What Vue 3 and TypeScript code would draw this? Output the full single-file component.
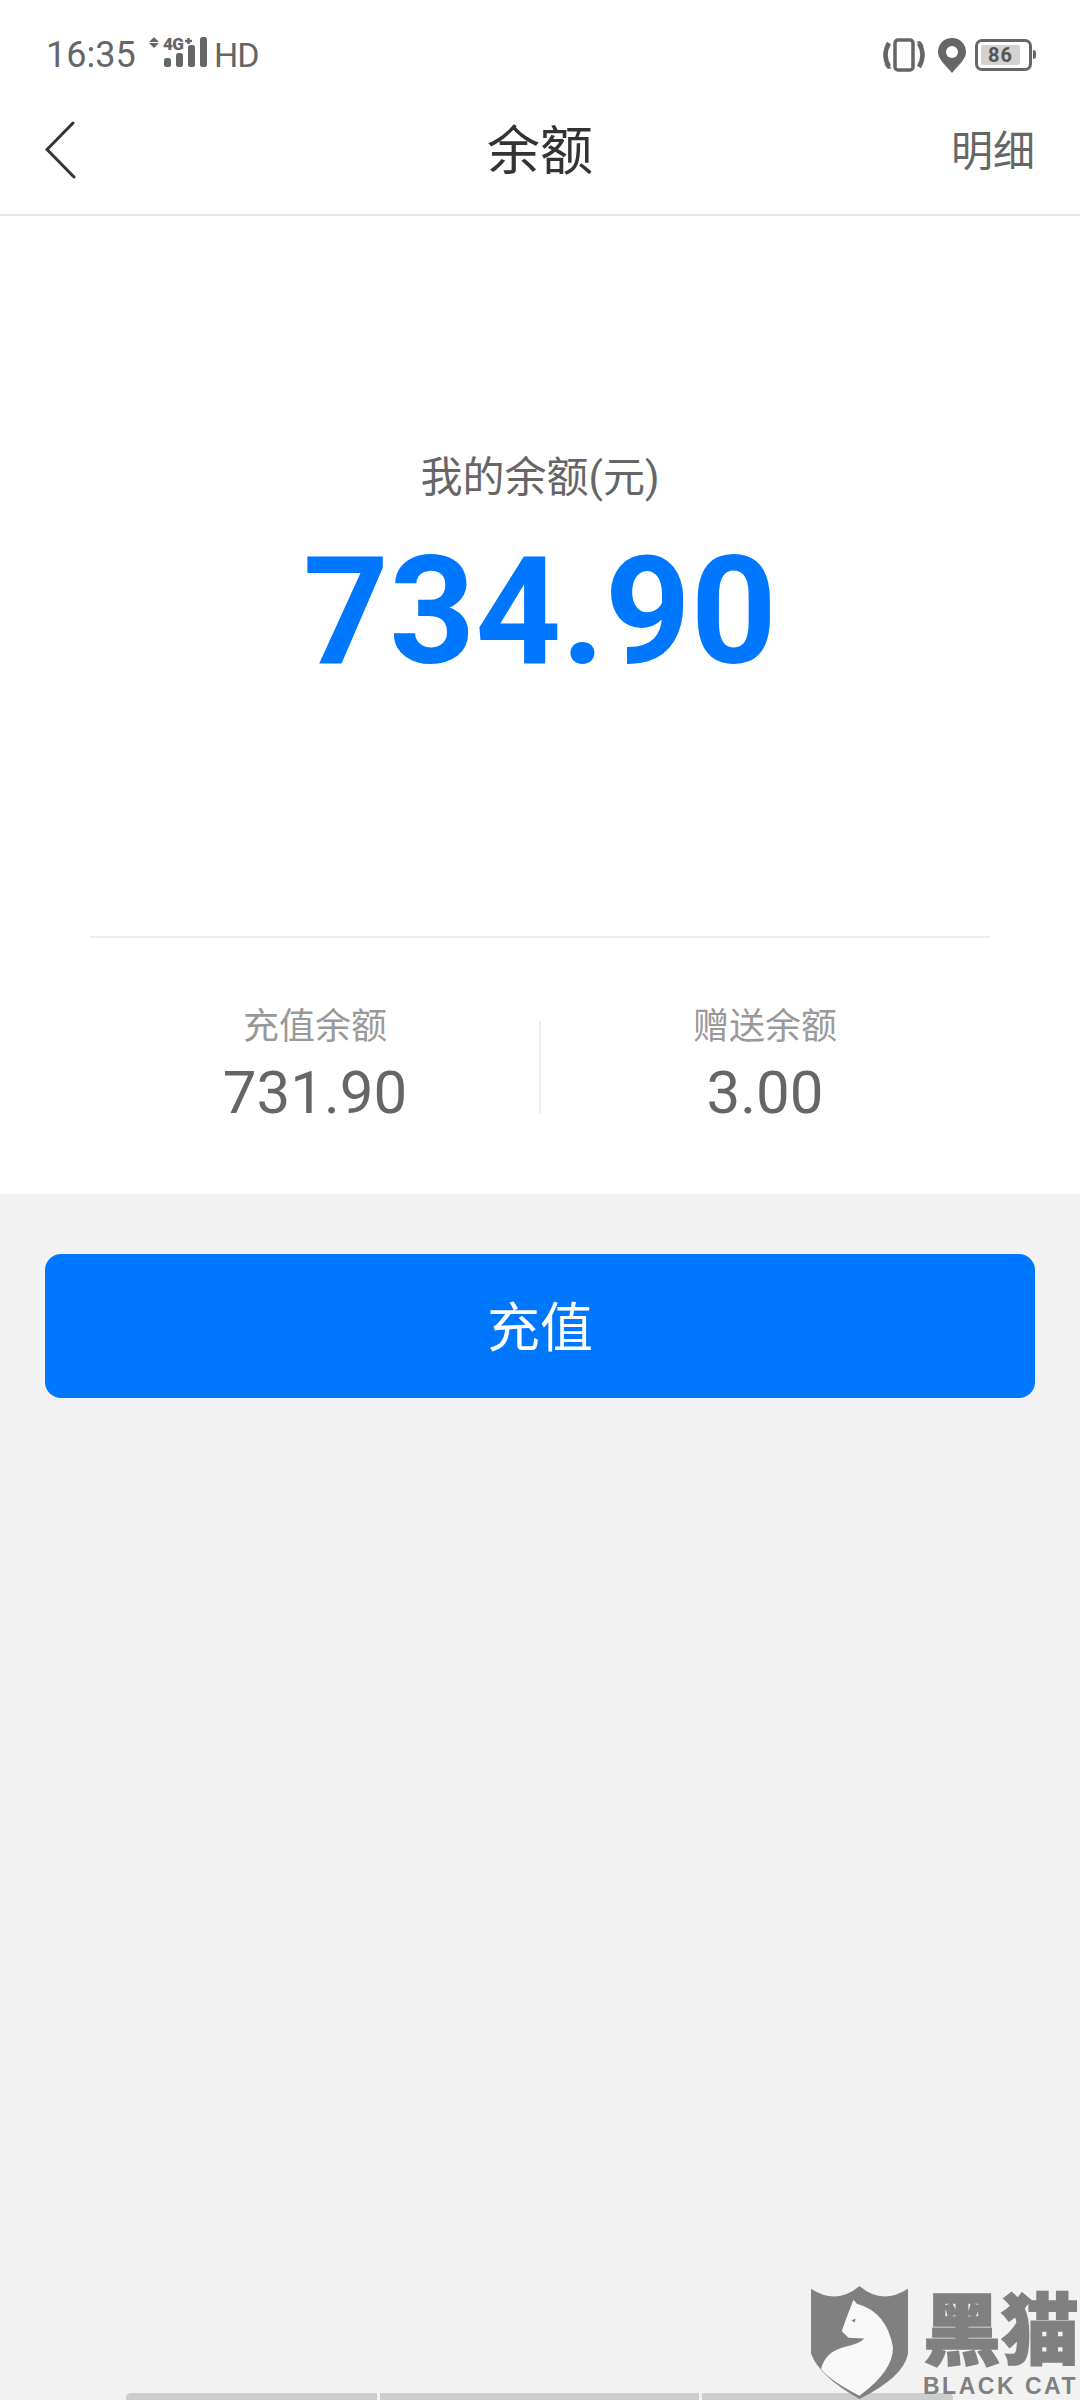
<script setup lang="ts">
const stats = [
  { label: "充值余额", value: "731.90" },
  { label: "赠送余额", value: "3.00" },
];
</script>

<template>
  <div class="page">
    <div class="status">
      <div class="status_left">
        <span class="time">16:35</span>
        <svg class="signal" width="62" height="42" viewBox="0 -8 62 42">
          <path d="M5 0l5 5H0zM5 11l5-5H0z" fill="#666" />
          <text x="14" y="13" class="net">4G</text>
          <path d="M36 4h7M39.500 1v6" stroke="#666" stroke-width="2.500" />
          <rect x="15" y="21" width="7" height="9" rx="2.500" fill="#666" />
          <rect x="27" y="16" width="7" height="14" rx="2.500" fill="#666" />
          <rect x="39" y="8" width="7" height="22" rx="2.500" fill="#666" />
          <rect x="51" y="0" width="7" height="30" rx="2.500" fill="#666" />
        </svg>
        <span class="hd">HD</span>
      </div>
      <div class="status_right">
        <svg width="44" height="34" viewBox="0 0 44 34">
          <rect x="13" y="2" width="18" height="30" rx="3" fill="none" stroke="#666" stroke-width="3.500" />
          <path d="M7 5Q0 17 7 29" fill="none" stroke="#666" stroke-width="4.500" />
          <path d="M37 5Q44 17 37 29" fill="none" stroke="#666" stroke-width="4.500" />
          <path d="M2 26l8 4-4 1zM42 8l-8-4 4-1z" fill="#666" />
        </svg>
        <svg width="28" height="35" viewBox="0 0 28 35">
          <path d="M14 0C6 0 0 6 0 14c0 8 9 14 14 21 5-7 14-13 14-21C28 6 22 0 14 0z" fill="#666" />
          <circle cx="14" cy="14" r="6" fill="#fff" />
        </svg>
        <div class="battery">
          <div class="battery_fill">86</div>
        </div>
      </div>
    </div>

    <div class="nav">
      <svg class="back" width="32" height="58" viewBox="0 0 32 58">
        <path d="M28 2L2 28.500 29 56" fill="none" stroke="#333" stroke-width="3" stroke-linecap="round" />
      </svg>
      <div class="title">余额</div>
      <div class="detail">明细</div>
    </div>

    <div class="summary">
      <div class="hero">
        <div class="hero_label">我的余额(元)</div>
        <div class="hero_value">734.90</div>
      </div>
      <div class="stats">
        <div v-for="s in stats" :key="s.label" class="stat">
          <div class="stat_label">{{ s.label }}</div>
          <div class="stat_value">{{ s.value }}</div>
        </div>
      </div>
    </div>

    <button class="recharge">充值</button>

    <div class="watermark">
      <svg width="97" height="113" viewBox="213 137 290 338">
        <path d="M213 145Q290 195 358 137Q425 195 503 145L503 340Q490 410 358 475Q240 410 213 340Z" fill="#808080" />
        <path d="M340 178L350 190Q440 215 458 320Q460 390 358 465Q270 420 243 385Q255 335 310 320Q360 310 372 294L325 292L305 272L318 235Z" fill="#f8f8f8" />
        <path d="M334 240l12-6-2 12z" fill="#808080" />
      </svg>
      <div class="brand">
        <div class="brand_cn">黑猫</div>
        <div class="brand_en">BLACK CAT</div>
      </div>
    </div>

    <div class="bottom_bar">
      <span class="seg seg_a"></span>
      <span class="seg seg_b"></span>
      <span class="seg seg_c"></span>
    </div>
  </div>
</template>

<style scoped>
.page {
  position: relative;
  width: 1080px;
  height: 2400px;
  overflow: hidden;
  display: flex;
  flex-direction: column;
  background: #f2f2f2;
  font-family: Roboto, "Noto Sans CJK SC", sans-serif;
}
.status {
  height: 74px;
  padding: 34px 48px 0 46px;
  box-sizing: border-box;
  background: #fff;
  display: flex;
  justify-content: space-between;
  align-items: flex-start;
}
.status_left {
  display: flex;
  align-items: center;
  height: 42px;
  color: #666;
}
.time {
  font-size: 36px;
  line-height: 42px;
  width: 103px;
}
.signal {
  margin-top: -11px;
}
.net {
  font: 900 17px Roboto, sans-serif;
  letter-spacing: -0.5px;
  fill: #666;
}
.hd {
  font-size: 34px;
  line-height: 42px;
  letter-spacing: -1px;
  margin-left: 3px;
}
.status_right {
  display: flex;
  align-items: center;
  gap: 12px;
  height: 42px;
}
.battery {
  position: relative;
  width: 57px;
  height: 32px;
  box-sizing: border-box;
  border: 3px solid #666;
  border-radius: 7px;
  margin-left: -3px;
  padding: 3px;
}
.battery::after {
  content: "";
  position: absolute;
  right: -7px;
  top: 8px;
  width: 3px;
  height: 9px;
  border-radius: 0 3px 3px 0;
  background: #666;
}
.battery_fill {
  width: 39px;
  height: 20px;
  background: #d2d2d2;
  border-radius: 2px;
  color: #555;
  font-size: 20px;
  font-weight: 700;
  line-height: 20px;
  text-align: center;
  letter-spacing: 1px;
}
.nav {
  position: relative;
  height: 142px;
  background: #fff;
  border-bottom: 2px solid #e6e6e6;
  box-sizing: border-box;
  display: flex;
  align-items: center;
  justify-content: center;
}
.back {
  position: absolute;
  left: 45px;
  top: 47px;
}
.title {
  font-size: 53px;
  line-height: 76px;
  color: #333;
  margin-top: 15px;
}
.detail {
  position: absolute;
  right: 45px;
  top: 48px;
  font-size: 42px;
  line-height: 60px;
  color: #666;
}
.summary {
  background: #fff;
  height: 978px;
  padding: 0 90px;
  box-sizing: border-box;
  display: flex;
  flex-direction: column;
}
.hero {
  height: 722px;
  border-bottom: 2px solid #ececec;
  box-sizing: border-box;
  display: flex;
  flex-direction: column;
  align-items: center;
  padding-top: 232px;
}
.hero_label {
  font-size: 42px;
  line-height: 60px;
  color: #666;
}
.hero_value {
  font-size: 150px;
  line-height: 178px;
  font-weight: 700;
  color: #0077ff;
  margin-top: 15px;
}
.stats {
  position: relative;
  display: grid;
  grid-template-columns: 1fr 1fr;
  margin: 63px -90px 0;
  padding: 0 90px;
}
.stats::after {
  content: "";
  position: absolute;
  left: 539px;
  top: 20px;
  width: 2px;
  height: 93px;
  background: #eee;
}
.stat {
  display: flex;
  flex-direction: column;
  align-items: center;
}
.stat_label {
  font-size: 36px;
  line-height: 52px;
  color: #999;
}
.stat_value {
  font-size: 60px;
  line-height: 70px;
  color: #666;
  margin-top: 5px;
}
.recharge {
  display: block;
  width: 990px;
  height: 144px;
  margin: 60px 45px 0;
  border: 0;
  padding: 0 0 5px;
  border-radius: 16px;
  background: #0077ff;
  color: #fff;
  font-family: inherit;
  font-size: 53px;
}
.watermark {
  position: absolute;
  left: 811px;
  top: 2286px;
  z-index: 2;
  display: flex;
  gap: 15px;
}
.brand {
  color: #808080;
  margin-top: 8px;
}
.brand_cn {
  font-size: 78px;
  line-height: 78px;
  font-weight: 900;
  white-space: nowrap;
  -webkit-text-stroke: 1.5px #808080;
}
.brand_en {
  font-family: "Liberation Sans", sans-serif;
  font-size: 23px;
  line-height: 22px;
  font-weight: 700;
  letter-spacing: 2.500px;
  white-space: nowrap;
  margin-top: 3px;
}
.bottom_bar {
  position: absolute;
  left: 126px;
  bottom: 0;
  display: flex;
  gap: 3px;
}
.seg {
  height: 7px;
  background: #cdcdcd;
}
.seg_a {
  width: 251px;
  border-radius: 5px 0 0 0;
}
.seg_b {
  width: 319px;
}
.seg_c {
  width: 251px;
  border-radius: 0 5px 0 0;
}
</style>
